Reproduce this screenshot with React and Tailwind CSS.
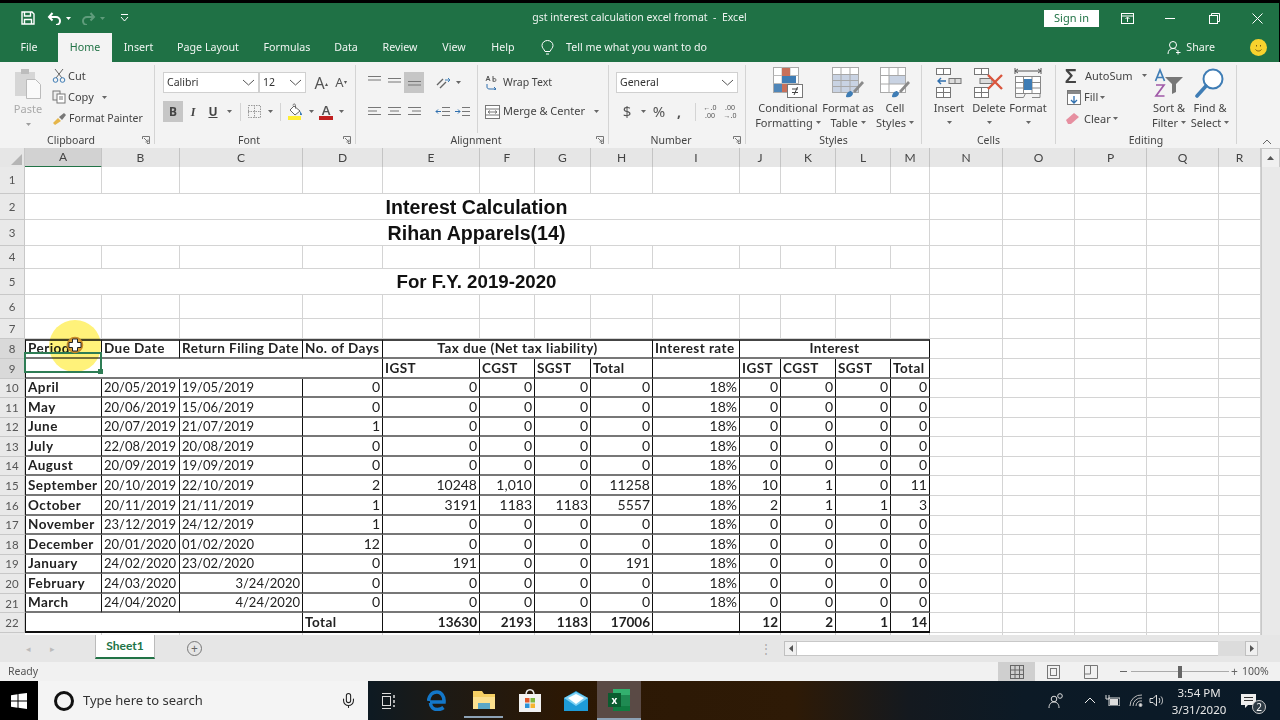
import React from 'react';
import { Mic } from 'lucide-react';

const COLS = 'grid-cols-[25px_77px_78px_123px_80px_97px_55px_56px_62px_87px_41px_55px_55px_39px_73px_72px_72px_72px_42px_19px]';
const ROWS = 'grid-rows-[27px_26px_26px_23px_26px_24px_20px_20px_19.5px_repeat(13,19.58px)_2px]';
const LETTERS = ['A', 'B', 'C', 'D', 'E', 'F', 'G', 'H', 'I', 'J', 'K', 'L', 'M', 'N', 'O', 'P', 'Q', 'R'];

const data = [
  ['April', '20/05/2019', '19/05/2019', 0, 0, 0, 0, 0, 0, 0, 0, 0],
  ['May', '20/06/2019', '15/06/2019', 0, 0, 0, 0, 0, 0, 0, 0, 0],
  ['June', '20/07/2019', '21/07/2019', 1, 0, 0, 0, 0, 0, 0, 0, 0],
  ['July', '22/08/2019', '20/08/2019', 0, 0, 0, 0, 0, 0, 0, 0, 0],
  ['August', '20/09/2019', '19/09/2019', 0, 0, 0, 0, 0, 0, 0, 0, 0],
  ['September', '20/10/2019', '22/10/2019', 2, 10248, '1,010', 0, 11258, 10, 1, 0, 11],
  ['October', '20/11/2019', '21/11/2019', 1, 3191, 1183, 1183, 5557, 2, 1, 1, 3],
  ['November', '23/12/2019', '24/12/2019', 1, 0, 0, 0, 0, 0, 0, 0, 0],
  ['December', '20/01/2020', '01/02/2020', 12, 0, 0, 0, 0, 0, 0, 0, 0],
  ['January', '24/02/2020', '23/02/2020', 0, 191, 0, 0, 191, 0, 0, 0, 0],
  ['February', '24/03/2020', '3/24/2020', 0, 0, 0, 0, 0, 0, 0, 0, 0],
  ['March', '24/04/2020', '4/24/2020', 0, 0, 0, 0, 0, 0, 0, 0, 0],
];

const Caret = ({ className = '' }) => (
  <svg width="5" height="3" viewBox="0 0 5 3" className={className}><path d="M0 0h5L2.5 3z" fill="#666" /></svg>
);

const Launcher = () => (
  <svg width="8" height="8" viewBox="0 0 8 8" className="mr-[4px] mt-[3px] shrink-0" fill="none" stroke="#777">
    <path d="M.5 3V.5h7v7H5M2 2l4 4M6 3.5V6H3.5" />
  </svg>
);

const Group = ({ width, label, launcher, children }) => (
  <div className={`${width} h-[79px] mt-[3px] border-r border-[#d4d4d4] shrink-0 flex flex-col`}>
    <div className="h-[68px] flex">{children}</div>
    <div className="h-[11px] flex items-start">
      <span className="flex-1 text-center text-[10.5px] leading-[14px] text-[#444]">{label}</span>
      {launcher && <Launcher />}
    </div>
  </div>
);

const Combo = ({ width, text }) => (
  <div className={`${width} h-[21px] bg-white border border-[#d0d0d0] flex items-center justify-between pl-[3px] pr-[3px] text-[10.5px] text-[#333] shrink-0`}>
    <span>{text}</span>
    <svg width="13" height="7" viewBox="0 0 13 7" fill="none" stroke="#555"><path d="M1 1l5.5 5L12 1" /></svg>
  </div>
);

const Box = ({ width, active, children }) => (
  <div className={`${width} h-[21px] shrink-0 flex items-center justify-center ${active ? 'bg-[#c6c6c6]' : ''}`}>{children}</div>
);

const Sep = ({ className = '' }) => <div className={`w-px h-[18px] bg-[#d4d4d4] shrink-0 ${className}`} />;

const Lines = ({ rows, className = '' }) => (
  <svg width="13" height="11" viewBox="0 0 13 11" stroke="#777" className={className}>
    {rows.map(([a, b], i) => <path key={i} d={`M${a} ${1.5 + i * 3.5}H${b}`} />)}
  </svg>
);

const BigButton = ({ width, icon, lines, caretLine }) => (
  <div className={`${width} shrink-0 flex flex-col items-center`}>
    <div className="h-[35px] flex items-center justify-center">{icon}</div>
    {lines.map((l, i) => (
      <div key={i} className="h-[15px] leading-[15px] text-[11px] text-[#444] whitespace-nowrap flex items-center gap-[3px]">
        {l}{caretLine && i === 1 && <Caret />}
      </div>
    ))}
    {!caretLine && <div className="h-[15px] flex items-center"><Caret /></div>}
  </div>
);

const CondIcon = () => (
  <svg width="30" height="32" viewBox="0 0 30 32" fill="none">
    <rect x=".5" y=".5" width="25" height="25" fill="#fff" stroke="#aaa" />
    <path d="M.5 8.5h25M.5 16.5h25M9 .5v25M17 .5v25" stroke="#bbb" />
    <rect x="9" y="1" width="8" height="8" fill="#c8705a" />
    <rect x="9" y="9" width="14" height="7" fill="#3f7db5" />
    <rect x="9" y="17" width="6" height="8" fill="#c8705a" />
    <rect x="1" y="17" width="8" height="8" fill="#4f86b8" />
    <rect x="14.5" y="17.5" width="15" height="13" fill="#fff" stroke="#777" />
    <path d="M19 22h6M19 25.5h6M24.5 20l-3.5 8" stroke="#444" />
  </svg>
);

const TableIcon = () => (
  <svg width="32" height="32" viewBox="0 0 32 32" fill="none">
    <rect x=".5" y=".5" width="26" height="25" fill="#fff" stroke="#aaa" />
    <rect x="1" y="7" width="25" height="18" fill="#c9d3e3" />
    <path d="M.5 7.5h26M.5 13.5h26M.5 19.5h26M9 .5v25M18 .5v25" stroke="#a8a8a8" />
    <path d="M14 30c0-4 3-6 5-6l2 2c0 3-3 5-7 4z" fill="#3f7db5" />
    <path d="M21 24l9-10 2 2-9 10z" fill="#8a8a8a" />
  </svg>
);

const StylesIcon = () => (
  <svg width="30" height="32" viewBox="0 0 30 32" fill="none">
    <rect x=".5" y=".5" width="25" height="25" fill="#fff" stroke="#aaa" />
    <rect x="9" y="8" width="16" height="9" fill="#c9d3e3" />
    <path d="M.5 8.5h25M.5 17h25M9 .5v25M18 .5v8" stroke="#a8a8a8" />
    <path d="M12 30c0-4 3-6 5-6l2 2c0 3-3 5-7 4z" fill="#3f7db5" />
    <path d="M19 24l9-10 2 2-9 10z" fill="#8a8a8a" />
  </svg>
);

const InsertIcon = () => (
  <svg width="26" height="30" viewBox="0 0 26 30" fill="none" stroke="#777">
    <rect x=".5" y=".5" width="14" height="6" fill="#fff" /><path d="M7.5.5v6" />
    <rect x="13" y="10.5" width="12" height="5" fill="#ddd" /><path d="M19 10.5v5" />
    <path d="M10 13H2M5 10l-3 3 3 3" stroke="#2f6fae" strokeWidth="1.4" />
    <rect x=".5" y="19.5" width="14" height="10" fill="#fff" /><path d="M7.5 19.5v10M.5 24.5h14" />
  </svg>
);

const DeleteIcon = () => (
  <svg width="30" height="30" viewBox="0 0 30 30" fill="none" stroke="#777">
    <rect x=".5" y=".5" width="14" height="6" fill="#fff" /><path d="M7.5.5v6" />
    <rect x="6" y="10.5" width="12" height="5" fill="#ddd" />
    <rect x=".5" y="19.5" width="14" height="10" fill="#fff" /><path d="M7.5 19.5v10M.5 24.5h14" />
    <path d="M14 7l14 14M28 7L14 21" stroke="#d9553d" strokeWidth="2.4" />
  </svg>
);

const FormatIcon = () => (
  <svg width="28" height="32" viewBox="0 0 28 32" fill="none" stroke="#888">
    <path d="M1 1v6M27 1v6M1 4h26M1 4l3-2M1 4l3 2M27 4l-3-2M27 4l-3 2" stroke="#555" />
    <rect x="1.5" y="9.5" width="25" height="17" fill="#fff" />
    <path d="M1.5 15.5h25M1.5 21h25M9.5 9.5v17M18 9.5v17" />
    <rect x="10" y="12" width="8" height="11" fill="#3f7db5" stroke="none" />
    <path d="M1.5 26.5v4h8l2-4M16 26.5h10v4h-8" />
  </svg>
);

const SortIcon = () => (
  <svg width="30" height="30" viewBox="0 0 30 30" fill="none">
    <path d="M1.5 13L6 2l4.5 11M3 9.5h6" stroke="#3f7db5" strokeWidth="1.7" />
    <path d="M2 17h8L2 28h8.5" stroke="#a05aa8" strokeWidth="1.7" />
    <path d="M11 9h18l-7 7v8l-4 2V16z" fill="#777" />
  </svg>
);

const FindIcon = () => (
  <svg width="30" height="32" viewBox="0 0 30 32" fill="none">
    <circle cx="18" cy="12" r="9.5" stroke="#3f7db5" strokeWidth="2" fill="#fff" />
    <path d="M11 19L2 29" stroke="#3f7db5" strokeWidth="3.6" strokeLinecap="round" />
  </svg>
);

const Ribbon = () => (
  <div className="h-[86px] bg-[#f3f3f3] flex shrink-0 relative">
    <Group width="w-[155px]" label="Clipboard" launcher>
      <div className="w-[52px] flex flex-col items-center pl-[4px] shrink-0">
        <svg width="28" height="31" viewBox="0 0 28 31" fill="none" className="mt-[3px]">
          <rect x="1" y="4" width="20" height="24" fill="#d6d6d6" />
          <rect x="7" y="1" width="8" height="5" fill="#bdbdbd" />
          <path d="M12.5 11.5h9l5 5v14h-14z" fill="#fafafa" stroke="#bbb" />
        </svg>
        <div className="text-[11px] leading-[14px] mt-[3px] text-[#aaa]">Paste</div>
        <Caret className="mt-[7px] opacity-60" />
      </div>
      <div className="flex flex-col text-[11px] text-[#444]">
        <div className="h-[21.5px] flex items-center">
          <svg width="14" height="15" viewBox="0 0 14 15" fill="none" stroke="#666" className="mr-[2px]">
            <path d="M3 1l7 9M11 1l-7 9" /><circle cx="3.5" cy="12" r="2.3" stroke="#3f7db5" /><circle cx="10.5" cy="12" r="2.3" stroke="#3f7db5" />
          </svg>
          Cut
        </div>
        <div className="h-[21.5px] flex items-center">
          <svg width="14" height="14" viewBox="0 0 14 14" fill="none" stroke="#777" className="mr-[2px]">
            <rect x="1" y="1" width="7" height="9" fill="#eee" /><rect x="5" y="4" width="8" height="9" fill="#fff" /><path d="M7 7h4M7 9h4" />
          </svg>
          Copy<Caret className="ml-[8px]" />
        </div>
        <div className="h-[21.5px] flex items-center text-[10.5px]">
          <svg width="15" height="14" viewBox="0 0 15 14" className="mr-[2px]">
            <path d="M1 11l5-5 3 3-6 4z" fill="#e6b64a" /><path d="M7 5l5-4 2 2-4 5z" fill="#777" />
          </svg>
          Format Painter
        </div>
      </div>
    </Group>

    <Group width="w-[201px]" label="Font" launcher>
      <div className="pl-[8px] pt-[7px] flex flex-col gap-[8px]">
        <div className="flex items-center">
          <Combo width="w-[96px]" text="Calibri" />
          <Combo width="w-[47px]" text="12" />
          <span className="ml-[5px] w-[20px] text-center text-[16px] leading-none text-[#555]">A<sup className="text-[6px]">▴</sup></span>
          <span className="w-[20px] text-center text-[13px] leading-none text-[#555]">A<sup className="text-[6px]">▾</sup></span>
        </div>
        <div className="flex items-center text-[#444]">
          <Box width="w-[20px]" active><span className="text-[12px] font-bold">B</span></Box>
          <Box width="w-[20px]"><span className="text-[12px] italic font-['Liberation_Serif',serif] font-bold">I</span></Box>
          <Box width="w-[20px]"><span className="text-[12px] font-bold underline">U</span></Box>
          <Box width="w-[12px]"><Caret /></Box>
          <Sep className="ml-[5px] mr-[2px]" />
          <Box width="w-[22px]">
            <svg width="13" height="13" viewBox="0 0 13 13" fill="none" stroke="#999" strokeDasharray="1.5 1"><rect x=".5" y=".5" width="12" height="12" /><path d="M6.5 0v13M0 6.5h13" /></svg>
          </Box>
          <Box width="w-[10px]"><Caret /></Box>
          <Sep className="ml-[5px] mr-[3px]" />
          <Box width="w-[22px]">
            <svg width="16" height="17" viewBox="0 0 16 17">
              <path d="M3 7l4-4 6 5-5 4z" fill="#fff" stroke="#666" /><path d="M6 2.500c0-2 2.500-2 2.500 0v3" fill="none" stroke="#666" /><path d="M13 8l2 3v1h-2z" fill="#3f7db5" />
              <rect x="1" y="13" width="13" height="4" fill="#ffee33" />
            </svg>
          </Box>
          <Box width="w-[10px]"><Caret /></Box>
          <Box width="w-[20px]">
            <div className="flex flex-col items-center leading-none">
              <span className="text-[13px] leading-[12px] font-semibold text-[#555]">A</span>
              <span className="w-[14px] h-[4px] bg-[#c02020]" />
            </div>
          </Box>
          <Box width="w-[10px]"><Caret /></Box>
        </div>
      </div>
    </Group>

    <Group width="w-[253px]" label="Alignment" launcher>
      <div className="w-[122px] h-[68px] border-r border-[#d4d4d4] pl-[8px] pt-[7px] flex flex-col gap-[8px] shrink-0">
        <div className="flex items-center">
          <Box width="w-[20px]"><Lines rows={[[0, 13], [0, 13]]} className="-mt-[4px]" /></Box>
          <Box width="w-[20px]"><Lines rows={[[0, 13], [0, 13]]} /></Box>
          <Box width="w-[20px]" active><Lines rows={[[0, 13], [0, 13]]} className="mt-[5px]" /></Box>
          <div className="w-[9px]" />
          <Box width="w-[20px]">
            <svg width="16" height="14" viewBox="0 0 16 14" fill="none" stroke="#666"><path d="M2 9l6-6M5 12l6-6" strokeWidth="1.400" /><path d="M10 4l5 0M13 2l2 2-2 2" stroke="#3f7db5" /></svg>
          </Box>
          <Box width="w-[10px]"><Caret /></Box>
        </div>
        <div className="flex items-center">
          <Box width="w-[20px]"><Lines rows={[[0, 13], [0, 9], [0, 13], [0, 9]]} /></Box>
          <Box width="w-[20px]"><Lines rows={[[0, 13], [2, 11], [0, 13], [2, 11]]} /></Box>
          <Box width="w-[20px]"><Lines rows={[[0, 13], [4, 13], [0, 13], [4, 13]]} /></Box>
          <div className="w-[8px]" />
          <Box width="w-[20px]">
            <svg width="15" height="11" viewBox="0 0 15 11" fill="none" stroke="#777"><path d="M7 1.500h8M7 5.500h8M7 9.500h8" /><path d="M6 5.500H1M3 3.500l-2 2 2 2" stroke="#2f6fae" /></svg>
          </Box>
          <Box width="w-[20px]">
            <svg width="15" height="11" viewBox="0 0 15 11" fill="none" stroke="#777"><path d="M7 1.500h8M7 5.500h8M7 9.500h8" /><path d="M0 5.500h5M3 3.500l2 2-2 2" stroke="#2f6fae" /></svg>
          </Box>
        </div>
      </div>
      <div className="pl-[7px] pt-[7px] flex flex-col gap-[8px] text-[11px] text-[#444]">
        <div className="h-[21px] flex items-center text-[10.5px]">
          <svg width="14" height="15" viewBox="0 0 14 15" fill="none" stroke="#555" className="mr-[4px]">
            <path d="M1 6l2-5 2 5M2 4.500h2M8 1v5.500M8 4c2-1 3 0 3 1s-1 2-3 1" /><path d="M2 9v3c0 1.500 1 2 3 2h6M9 12l2 2-2 1" stroke="#2f6fae" />
          </svg>
          Wrap Text
        </div>
        <div className="h-[21px] flex items-center">
          <svg width="15" height="14" viewBox="0 0 15 14" fill="none" stroke="#777" className="mr-[3px]">
            <rect x=".5" y=".5" width="14" height="13" fill="#fff" /><path d="M.5 4h14M.5 10h14M3 7h9M5 5.500L3 7l2 1.500M10 5.500L12 7l-2 1.500" />
          </svg>
          Merge &amp; Center<Caret className="ml-[9px]" />
        </div>
      </div>
    </Group>

    <Group width="w-[137px]" label="Number" launcher>
      <div className="pl-[7px] pt-[7px] flex flex-col gap-[8px]">
        <Combo width="w-[122px]" text="General" />
        <div className="flex items-center text-[#555]">
          <Box width="w-[22px]"><span className="text-[15px]">$</span></Box>
          <Box width="w-[10px]"><Caret /></Box>
          <Box width="w-[22px]"><span className="text-[15px]">%</span></Box>
          <Box width="w-[18px]"><span className="text-[14px] font-bold">,</span></Box>
          <Sep className="ml-[7px] mr-[4px]" />
          <Box width="w-[20px]"><span className="text-[7px] leading-[8px] text-center">←.0<br />.00</span></Box>
          <Box width="w-[20px]"><span className="text-[7px] leading-[8px] text-center">.00<br />→.0</span></Box>
        </div>
      </div>
    </Group>

    <Group width="w-[176px]" label="Styles">
      <div className="pl-[11px] flex">
        <BigButton width="w-[62px]" icon={<CondIcon />} lines={['Conditional', 'Formatting']} caretLine />
        <BigButton width="w-[58px]" icon={<TableIcon />} lines={['Format as', 'Table']} caretLine />
        <BigButton width="w-[36px]" icon={<StylesIcon />} lines={['Cell', 'Styles']} caretLine />
      </div>
    </Group>

    <Group width="w-[134px]" label="Cells">
      <div className="pl-[7px] flex">
        <BigButton width="w-[40px]" icon={<InsertIcon />} lines={['Insert']} />
        <BigButton width="w-[40px]" icon={<DeleteIcon />} lines={['Delete']} />
        <BigButton width="w-[38px]" icon={<FormatIcon />} lines={['Format']} />
      </div>
    </Group>

    <Group width="w-[181px]" label="Editing">
      <div className="w-[93px] pl-[9px] flex flex-col text-[11px] text-[#444] shrink-0">
        <div className="h-[21.5px] flex items-center">
          <span className="w-[20px] text-[20px] leading-none font-semibold text-[#444]">Σ</span>AutoSum<Caret className="ml-[9px]" />
        </div>
        <div className="h-[21.5px] flex items-center">
          <svg width="14" height="15" viewBox="0 0 14 15" fill="none" className="mx-[2px] mr-[3px]">
            <rect x=".5" y=".5" width="13" height="14" fill="#fff" stroke="#777" /><rect x="1" y="1" width="12" height="3" fill="#888" /><path d="M7 6v7M4 10l3 3 3-3" stroke="#2f6fae" strokeWidth="1.3" />
          </svg>
          Fill<Caret className="ml-[2px]" />
        </div>
        <div className="h-[21.5px] flex items-center">
          <svg width="15" height="13" viewBox="0 0 15 13" className="mr-[4px]"><path d="M1 8l8-7 5 4-8 7H3z" fill="#e68fa0" /></svg>
          Clear<Caret className="ml-[2px]" />
        </div>
      </div>
      <BigButton width="w-[40px]" icon={<SortIcon />} lines={['Sort &', 'Filter']} caretLine />
      <BigButton width="w-[42px]" icon={<FindIcon />} lines={['Find &', 'Select']} caretLine />
    </Group>

    <svg width="10" height="6" viewBox="0 0 10 6" fill="none" stroke="#666" className="absolute left-[1262px] top-[77px]"><path d="M1 5l4-4 4 4" /></svg>
  </div>
);

const Cell = ({ className = '', children, span }) => {
  return <div className={`min-w-0 border-r border-b border-[#d4d4d4] bg-white flex items-end whitespace-nowrap px-[2px] leading-[18px] ${span || ''} ${className}`}>{children}</div>;
};

const RowHead = ({ n, sel }) => (
  <div className={`border-r border-b border-[#c8c8c8] flex items-center justify-center text-[11.5px] text-[#555] ${sel ? 'bg-[#d9d9d9]' : 'bg-[#e9e9e9]'}`}>{n}</div>
);

const LINE = 'border-r-[1.5px] border-r-[#111] border-b-2 border-b-[#777]';

const Sheet = () => {
  const blankRight = (key, cls = '') => ['N', 'O', 'P', 'Q', 'R'].map((c) => <Cell key={key + c} className={cls} />);

  const plainRow = (n) => (
    <React.Fragment key={n}>
      <RowHead n={n} />
      {LETTERS.map((c) => <Cell key={c} />)}
    </React.Fragment>
  );
  const titleRow = (n, text, size) => (
    <React.Fragment key={n}>
      <RowHead n={n} />
      <Cell span="col-span-13" className={`!items-center justify-center font-['Liberation_Sans',sans-serif] font-bold text-[#111] pr-[3px] ${size}`}>{text}</Cell>
      {blankRight(n)}
    </React.Fragment>
  );
  const th = 'font-bold text-[13.5px] tracking-[0.45px] text-[#222]';
  const total = 'font-bold text-[13.5px] text-[#222]';

  return (
    <div className="relative h-full font-['Lato',sans-serif] text-[14px] text-[#222]">
      <div className={`grid ${COLS} h-[19px] bg-[#e6e6e6] text-[12px] text-[#444]`}>
        <div className="border-r border-b border-[#c8c8c8] flex items-end justify-end p-[2px]">
          <svg width="11" height="11" viewBox="0 0 11 11"><path d="M11 0v11H0z" fill="#b5b5b5" /></svg>
        </div>
        {LETTERS.map((c) => (
          <div key={c} className={`flex items-center justify-center border-r border-[#c4c4c4] ${c === 'A' ? 'bg-[#d2d2d2] border-b-2 border-b-[#217346]' : 'border-b border-b-[#c8c8c8]'}`}>{c}</div>
        ))}
        <div className="bg-[#f0f0f0] border border-[#c8c8c8] flex items-center justify-center">
          <svg width="7" height="4" viewBox="0 0 7 4"><path d="M0 4h7L3.500 0z" fill="#555" /></svg>
        </div>
      </div>

      <div className={`grid ${COLS} ${ROWS}`}>
        {plainRow(1)}
        <div className="row-span-23 col-start-20 row-start-1 bg-[#e9e9e9] border-l border-[#c8c8c8]" />
        {titleRow(2, 'Interest Calculation', 'text-[19.6px]')}
        {titleRow(3, 'Rihan Apparels(14)', 'text-[19.6px]')}
        {plainRow(4)}
        {titleRow(5, 'For F.Y. 2019-2020', 'text-[18.7px]')}
        {plainRow(6)}
        {plainRow(7)}

        <RowHead n={8} sel />
        {['Period', 'Due Date', 'Return Filing Date', 'No. of Days'].map((t, i) => (
          <Cell key={t} className={`${LINE} ${th} border-t-2 border-t-[#444] ${i === 0 ? 'border-l border-l-[#111]' : ''}`}>{t}</Cell>
        ))}
        <Cell span="col-span-4" className={`${LINE} ${th} border-t-2 border-t-[#444] justify-center`}>Tax due (Net tax liability)</Cell>
        <Cell className={`${LINE} ${th} border-t-2 border-t-[#444]`}>Interest rate</Cell>
        <Cell span="col-span-4" className={`${LINE} ${th} border-t-2 border-t-[#444] justify-center`}>Interest</Cell>
        {blankRight(8)}

        <RowHead n={9} sel />
        <Cell span="col-span-4" className={`${LINE} border-l border-l-[#111]`} />
        {['IGST', 'CGST', 'SGST', 'Total'].map((t) => <Cell key={t} className={`${LINE} ${th}`}>{t}</Cell>)}
        <Cell className={LINE} />
        {['IGST', 'CGST', 'SGST', 'Total'].map((t) => <Cell key={t + 'i'} className={`${LINE} ${th}`}>{t}</Cell>)}
        {blankRight(9)}

        {data.map((r, i) => {
          const [name, due, filed, days, ...rest] = r;
          const nums = rest.slice(0, 4);
          const ints = rest.slice(4);
          return (
            <React.Fragment key={name}>
              <RowHead n={i + 10} />
              <Cell className={`${LINE} border-l border-l-[#111] ${th}`}>{name}</Cell>
              <Cell className={`${LINE} text-[13px]`}>{due}</Cell>
              <Cell className={`${LINE} text-[13px] ${filed.length < 10 ? 'justify-end' : ''}`}>{filed}</Cell>
              <Cell className={`${LINE} justify-end`}>{days}</Cell>
              {nums.map((v, j) => <Cell key={j} className={`${LINE} justify-end`}>{v}</Cell>)}
              <Cell className={`${LINE} justify-end`}>18%</Cell>
              {ints.map((v, j) => <Cell key={'i' + j} className={`${LINE} justify-end`}>{v}</Cell>)}
              {blankRight(name)}
            </React.Fragment>
          );
        })}

        <RowHead n={22} />
        <Cell span="col-span-3" className={`${LINE} !border-b-[#111] border-l border-l-[#111]`} />
        <Cell className={`${LINE} !border-b-[#111] ${th}`}>Total</Cell>
        {[13630, 2193, 1183, 17006].map((v, j) => <Cell key={j} className={`${LINE} !border-b-[#111] ${total} justify-end`}>{v}</Cell>)}
        <Cell className={`${LINE} !border-b-[#111]`} />
        {[12, 2, 1, 14].map((v, j) => <Cell key={'t' + j} className={`${LINE} !border-b-[#111] ${total} justify-end`}>{v}</Cell>)}
        {blankRight(22)}

        <div className="bg-[#e9e9e9]" />
        {LETTERS.map((c) => <div key={c} className="bg-white border-r border-[#d4d4d4]" />)}
      </div>

      {/* cursor highlight and selection sit on top of the sheet */}
      <div className="absolute left-[49px] top-[172px] w-[52px] h-[52px] rounded-full bg-[#fff27a] mix-blend-multiply" />
      <div className="absolute left-[24px] top-[204px] w-[78px] h-[21px] border-2 border-[#2e7d55]">
        <div className="absolute -right-[3px] -bottom-[3px] w-[5px] h-[5px] bg-[#2e7d55]" />
      </div>
      <svg width="18" height="18" viewBox="0 0 18 18" className="absolute left-[66px] top-[188px]">
        <circle cx="9" cy="9" r="7.500" fill="#d9a43a" stroke="#c98a2a" strokeWidth="1.500" />
        <path d="M6.500 3h5v3.500H15v5h-3.500V15h-5v-3.500H3v-5h3.500z" fill="#fff" stroke="#222" />
      </svg>
    </div>
  );
};

const BottomBars = () => (
  <>
    <div className="h-[27px] bg-[#e6e6e6] flex items-center shrink-0 relative">
      <div className="w-[95px] pl-[26px] flex gap-[19px] text-[#bbb] text-[9px] shrink-0">
        <span>◂</span><span>▸</span>
      </div>
      <div className="w-[60px] h-[24px] -mt-[4px] bg-white border-x border-[#bbb] border-b-2 border-b-[#217346] flex items-center justify-center font-['Lato',sans-serif] font-bold text-[12px] text-[#217346] shrink-0">Sheet1</div>
      <div className="ml-[32px] w-[15px] h-[15px] rounded-full border border-[#777] flex items-center justify-center text-[12px] leading-none text-[#666] shrink-0">+</div>
      <div className="ml-auto flex items-center mr-[22px]">
        <span className="text-[#aaa] text-[12px] leading-[5px] mr-[12px] tracking-tight">⋮</span>
        <div className="w-[13px] h-[15px] bg-[#f0f0f0] border border-[#c0c0c0] flex items-center justify-center">
          <svg width="4" height="7" viewBox="0 0 4 7"><path d="M4 0v7L0 3.500z" fill="#555" /></svg>
        </div>
        <div className="w-[421px] h-[15px] bg-white border-y border-[#c8c8c8]" />
        <div className="w-[27px] h-[15px] bg-[#dcdcdc]" />
        <div className="w-[13px] h-[15px] bg-[#f0f0f0] border border-[#c0c0c0] flex items-center justify-center">
          <svg width="4" height="7" viewBox="0 0 4 7"><path d="M0 0v7l4-3.500z" fill="#555" /></svg>
        </div>
      </div>
    </div>
    <div className="h-[19px] bg-[#f1f1f1] flex items-center pl-[8px] text-[10.5px] text-[#555] shrink-0">
      <span>Ready</span>
      <div className="ml-auto flex items-center h-full">
        <div className="w-[37px] h-full bg-[#cfcfcf] flex items-center justify-center">
          <svg width="14" height="14" viewBox="0 0 14 14" fill="none" stroke="#666"><rect x=".5" y=".5" width="13" height="13" /><path d="M5 .5v13M9.500.5v13M.5 5h13M.5 9.500h13" /></svg>
        </div>
        <div className="w-[37px] flex justify-center">
          <svg width="13" height="14" viewBox="0 0 13 14" fill="none" stroke="#777"><rect x=".5" y=".5" width="12" height="13" /><rect x="3.500" y="3.500" width="6" height="7" /></svg>
        </div>
        <div className="w-[37px] flex justify-center">
          <svg width="14" height="14" viewBox="0 0 14 14" fill="none" stroke="#777"><path d="M.5 13.500V.5h13v13zM.5 9h6V.5" /></svg>
        </div>
        <div className="ml-[11px] flex items-center w-[122px] text-[#666]">
          <div className="w-[7px] h-px bg-[#666]" />
          <div className="ml-[4px] w-[47px] h-px bg-[#aaa]" />
          <div className="w-[4px] h-[12px] bg-[#666]" />
          <div className="w-[47px] h-px bg-[#aaa]" />
          <span className="ml-[2px] text-[12px] leading-none">+</span>
        </div>
        <span className="w-[38px] text-[10.5px] text-[#555]">100%</span>
      </div>
    </div>
  </>
);

const Taskbar = () => (
  <div className="flex-1 flex items-center bg-[linear-gradient(90deg,#0e1a22_0%,#0e1a22_29%,#1c1a16_34%,#2c1804_44%,#2e1a06_62%,#14191f_71%,#0c1a26_80%,#0a1a28_100%)] text-white font-['Noto_Sans',sans-serif]">
    <div className="w-[38px] h-full bg-black flex items-center justify-center shrink-0">
      <svg width="16" height="16" viewBox="0 0 16 16" fill="#fff"><path d="M0 2.300l6.500-1V7.500H0zM7.500 1l8.500-1v7.500H7.500zM0 8.500h6.500v6.200L0 13.700zM7.500 8.500H16V16l-8.500-1.200z" /></svg>
    </div>
    <div className="w-[330px] h-full bg-[#f4f4f4] flex items-center pl-[16px] shrink-0 text-[#333] text-[13px]">
      <div className="w-[20px] h-[20px] rounded-full border-[3px] border-[#111] shrink-0" />
      <span className="ml-[9px]">Type here to search</span>
      <Mic size={17} strokeWidth={1.5} color="#222" className="ml-auto mr-[11px]" />
    </div>
    <div className="w-[41px] flex justify-center shrink-0">
      <svg width="16" height="16" viewBox="0 0 16 16" fill="none" stroke="#ddd"><path d="M1 .5h9M1 15.500h9" /><rect x="1.500" y="3.500" width="8" height="9" /><path d="M13 2v3M13 7v3M13 12v2" strokeWidth="1.500" /></svg>
    </div>
    <div className="w-[52px] pl-[4px] flex justify-center shrink-0">
      <svg width="20" height="21" viewBox="0 0 20 21" fill="none">
        <path d="M3 12h14c.5-6-3-10-7-10-5 0-8 4-8.500 9M3.500 13c0 4 3 6.500 7 6.500 2.500 0 4.500-.8 6-2" stroke="#1377c9" strokeWidth="3.600" />
      </svg>
    </div>
    <div className="w-[45px] h-full flex items-center justify-center shrink-0 relative border-b-2 border-b-transparent">
      <svg width="22" height="19" viewBox="0 0 22 19"><path d="M0 1h9l2 3h11v15H0z" fill="#f5cf63" /><rect x="0" y="7" width="22" height="12" fill="#fbe08f" /><rect x="5" y="13" width="12" height="6" fill="#5ba7c7" /></svg>
      <span className="absolute left-[3px] right-[3px] bottom-0 h-[2px] bg-[#8da2b5]" />
    </div>
    <div className="w-[47px] flex justify-center shrink-0">
      <svg width="22" height="23" viewBox="0 0 22 23" fill="none">
        <rect x="0" y="5" width="22" height="18" fill="#f2f2f2" /><path d="M7 6c0-7 8-7 8 0" stroke="#eee" strokeWidth="1.500" />
        <rect x="6" y="9" width="4.500" height="4.500" fill="#e3582c" /><rect x="11.500" y="9" width="4.500" height="4.500" fill="#7eb83c" /><rect x="6" y="14.500" width="4.500" height="4.500" fill="#2c93d8" /><rect x="11.500" y="14.500" width="4.500" height="4.500" fill="#f5b52e" />
      </svg>
    </div>
    <div className="w-[45px] flex justify-center shrink-0">
      <svg width="24" height="20" viewBox="0 0 24 20"><path d="M0 7L12 0l12 7v13H0z" fill="#1e9bd7" /><path d="M0 7l12 8 12-8-12-6z" fill="#7ed0f2" /><path d="M4 7l8 6 8-6-8-4z" fill="#fff" /></svg>
    </div>
    <div className="w-[44px] h-full -ml-[1px] bg-[#5a4a45] border-b-2 border-b-[#8da2b5] flex items-center justify-center shrink-0">
      <div className="relative w-[22px] h-[22px] flex items-center">
        <div className="absolute left-[5px] top-0 w-[17px] h-[22px] bg-[#1f8a52] rounded-[1px] flex flex-col justify-between">
          <span className="h-[6px] bg-[#33b06e]" /><span className="h-[5px] bg-[#107c41]" />
        </div>
        <span className="relative w-[13px] h-[14px] bg-[#0b5c2f] text-white text-[10px] leading-[14px] font-bold text-center">x</span>
      </div>
    </div>
    <div className="ml-auto flex items-center">
      <svg width="17" height="17" viewBox="0 0 17 17" fill="none" stroke="#ddd" className="mr-[19px]"><circle cx="6" cy="7" r="2.800" /><path d="M1 16c0-4 2-6 5-6s5 2 5 6" /><circle cx="12" cy="4" r="2.300" /></svg>
      <svg width="12" height="7" viewBox="0 0 12 7" fill="none" stroke="#eee" className="mr-[9px]"><path d="M1 6l5-5 5 5" /></svg>
      <svg width="15" height="11" viewBox="0 0 15 11" className="mr-[9px]"><rect x="4" y="3" width="11" height="8" fill="none" stroke="#ddd" /><rect x="5" y="4" width="8" height="6" fill="#ddd" /><path d="M1 0v4h3V0" stroke="#ddd" fill="none" /></svg>
      <svg width="14" height="13" viewBox="0 0 14 13" fill="none" stroke="#bbb" className="mr-[6px]"><path d="M1 12a11 11 0 0 1 12-11M4 12a8 8 0 0 1 9-8M7 12a5 5 0 0 1 6-5" /><circle cx="11.500" cy="11" r="1.500" fill="#ddd" /></svg>
      <svg width="15" height="13" viewBox="0 0 15 13" fill="none" stroke="#ddd"><path d="M1 4.500h3L7.500 1v11L4 8.500H1zM10 4c1 1 1 4 0 5M12 2.500c2 2 2 6 0 8" /></svg>
      <div className="w-[70px] text-center text-[11.500px] leading-[17px] text-[#e8e8e8]">
        <div>3:54 PM</div>
        <div>3/31/2020</div>
      </div>
      <div className="relative w-[46px] h-[20px] pl-[7px] flex items-center">
        <svg width="15" height="14" viewBox="0 0 15 14"><path d="M0 0h15v11H7l-3 3v-3H0z" fill="#eee" /><path d="M3 3.500h9M3 6.500h9" stroke="#333" /></svg>
        <span className="absolute left-[18px] top-[9px] w-[14px] h-[14px] rounded-full bg-[#2d3a44] border border-[#ccc] text-[10px] leading-[12px] text-center">2</span>
      </div>
    </div>
  </div>
);

const App = () => {
  return (
    <div className="w-[1280px] h-[720px] overflow-hidden flex flex-col bg-black font-['Noto_Sans',sans-serif]">
      <div className="h-[3px] bg-black shrink-0" />
      <div className="h-[59px] bg-[#1f7145] shrink-0 text-white mr-[1px]">
        <div className="h-[30px] grid grid-cols-[1fr_auto_1fr] items-center">
          <div className="flex items-center pl-[21px]">
            <svg width="14" height="14" viewBox="0 0 14 14" fill="none" stroke="#fff" strokeWidth="1.400"><path d="M1 1h10l2 2v10H1z" /><path d="M3.500 1v4h6V1M3.500 13V8.500h7V13" /></svg>
            <svg width="15" height="13" viewBox="0 0 15 13" fill="none" stroke="#fff" strokeWidth="2" className="ml-[12px]"><path d="M2 5h7a4 4 0 0 1 0 8M5.500 1L2 5l3.500 3.500" /></svg>
            <svg width="5" height="3" viewBox="0 0 5 3" className="ml-[4px]"><path d="M0 0h5L2.500 3z" fill="#fff" /></svg>
            <svg width="15" height="13" viewBox="0 0 15 13" fill="none" stroke="#5f9c7b" strokeWidth="2" className="ml-[10px]"><path d="M13 5H6a4 4 0 0 0 0 8M9.500 1L13 5 9.500 8.500" /></svg>
            <svg width="5" height="3" viewBox="0 0 5 3" className="ml-[4px]"><path d="M0 0h5L2.500 3z" fill="#5f9c7b" /></svg>
            <svg width="9" height="8" viewBox="0 0 9 8" fill="none" stroke="#fff" className="ml-[15px]"><path d="M1 .5h7M1 3l3.500 4L8 3" /></svg>
          </div>
          <div className="text-[10.5px] text-[#eef4f0] whitespace-pre">gst interest calculation excel fromat  -  Excel</div>
          <div className="flex items-center justify-end">
            <div className="w-[55px] h-[17px] bg-white text-[#217346] text-[11px] flex items-center justify-center">Sign in</div>
            <svg width="13" height="11" viewBox="0 0 13 11" fill="none" stroke="#fff" className="ml-[22px]"><rect x=".5" y=".5" width="12" height="10" /><path d="M.5 3h12M6.500 9V4.500M4.500 6l2-2 2 2" /></svg>
            <div className="ml-[31px] w-[10px] h-px bg-white" />
            <svg width="11" height="11" viewBox="0 0 11 11" fill="none" stroke="#fff" className="ml-[34px]"><rect x=".5" y="2.500" width="8" height="8" /><path d="M2.500 2.500v-2h8v8h-2" /></svg>
            <svg width="11" height="11" viewBox="0 0 11 11" fill="none" stroke="#fff" className="ml-[32px] mr-[16px]"><path d="M.5.500l10 10M10.500.500l-10 10" /></svg>
          </div>
        </div>
        <div className="h-[29px] flex items-center text-[10.7px] text-[#f0f5f2]">
          <div className="w-[58px] text-center">File</div>
          <div className="w-[54px] h-full bg-[#f3f3f3] text-[#217346] flex items-center justify-center">Home</div>
          <div className="w-[53px] text-center">Insert</div>
          <div className="w-[86px] text-center">Page Layout</div>
          <div className="w-[72px] text-center">Formulas</div>
          <div className="w-[46px] text-center">Data</div>
          <div className="w-[62px] text-center">Review</div>
          <div className="w-[46px] text-center">View</div>
          <div className="w-[52px] text-center">Help</div>
          <svg width="13" height="16" viewBox="0 0 13 16" fill="none" stroke="#fff" className="ml-[12px]"><path d="M4 11.500C3 9 1 8 1 5.500a5.500 5 0 0 1 11 0C12 8 10 9 9 11.500zM5 14h3" /></svg>
          <span className="ml-[12px]">Tell me what you want to do</span>
          <div className="ml-auto flex items-center">
            <svg width="15" height="15" viewBox="0 0 15 15" fill="none" stroke="#fff"><circle cx="6" cy="5" r="3.500" /><path d="M1 14c0-3.500 2-5.500 5-5.500 2 0 3 .5 4 2M11 10v4.500M9 12.500h4.500" /></svg>
            <span className="ml-[4px]">Share</span>
            <div className="ml-[35px] mr-[12px] w-[17px] h-[17px] rounded-full bg-[#f7d22e] flex items-center justify-center">
              <svg width="13" height="13" viewBox="0 0 13 13" fill="none" stroke="#7a5a10"><path d="M3.500 8.500c1.500 2 4.500 2 6 0M4.500 4v1.500M8.500 4v1.500" /></svg>
            </div>
          </div>
        </div>
      </div>
      <Ribbon />
      <div className="h-[487px] shrink-0 bg-white">
        <Sheet />
      </div>
      <BottomBars />
      <Taskbar />
    </div>
  );
};

export default App;
